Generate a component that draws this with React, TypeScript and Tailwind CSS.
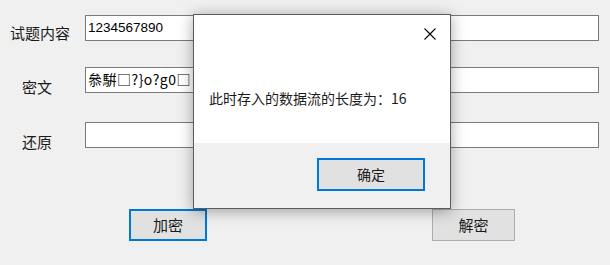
import React from "react";

const cjk = "font-['Noto_Sans_CJK_SC','Microsoft_YaHei',sans-serif]";

function Field({ label, value, labelClass, valueClass }: { label: string; value: string; labelClass: string; valueClass: string }) {
  return (
    <div className="flex items-start h-[26px]">
      <div className={`w-[85px] text-[15px] leading-none text-[#1a1a1a] ${labelClass} ${cjk}`}>{label}</div>
      <div className={`w-[514px] h-[26px] bg-white border border-[#7a7a7a] px-[2px] text-black whitespace-nowrap overflow-hidden ${valueClass}`}>
        {value}
      </div>
    </div>
  );
}

export default function App() {
  return (
    <div className="relative w-[610px] h-[265px] bg-[#f0f0f0] overflow-hidden">
      <div className="flex flex-col pt-[15px]">
        <Field
          label="试题内容"
          value="1234567890"
          labelClass="pl-[10px] pt-[10px]"
          valueClass="pt-[3px] text-[13.5px] leading-[17px] font-['Liberation_Sans',sans-serif]"
        />
        <div className="mt-[26px]">
          <Field
            label="密文"
            value="叅騈□?}o?g0□"
            labelClass="pl-[22px] pt-[12px]"
            valueClass={`pt-[2px] text-[14px] leading-[19px] tracking-[0.5px] ${cjk}`}
          />
        </div>
        <div className="mt-[29px]">
          <Field label="还原" value="" labelClass="pl-[22px] pt-[12px]" valueClass="" />
        </div>
      </div>
      <div className="flex mt-[61px]">
        <button className={`ml-[129px] w-[78px] h-[32px] bg-[#e1e1e1] border-2 border-[#0078d7] text-[15px] text-[#1a1a1a] ${cjk}`}>
          加密
        </button>
        <button className={`ml-[225px] w-[83px] h-[32px] bg-[#e1e1e1] border border-[#adadad] text-[15px] text-[#1a1a1a] ${cjk}`}>
          解密
        </button>
      </div>

      <div className="absolute left-[193px] top-[14px] w-[258px] h-[195px] border border-[#5c5c5c] bg-white shadow-[0_2px_14px_rgba(0,0,0,0.35)] flex flex-col">
        <div className="flex-1 relative">
          <svg className="absolute left-[230px] top-[13px]" width="12" height="12" viewBox="0 0 12 12">
            <path d="M0.5 0.5 L11.5 11.5 M11.5 0.5 L0.5 11.5" stroke="#000" strokeWidth="1.1" />
          </svg>
          <div className={`absolute left-[15px] top-[76px] text-[14px] leading-none text-[#1a1a1a] whitespace-nowrap ${cjk}`}>
            此时存入的数据流的长度为：16
          </div>
        </div>
        <div className="h-[65px] bg-[#f0f0f0] flex justify-end items-start pr-[25px] pt-[15px]">
          <button className={`w-[108px] h-[33px] bg-[#e1e1e1] border-2 border-[#0078d7] text-[14px] text-[#1a1a1a] ${cjk}`}>
            确定
          </button>
        </div>
      </div>
    </div>
  );
}
